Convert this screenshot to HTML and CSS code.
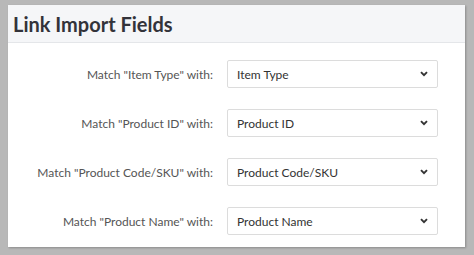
FILE: index.html
```html
<!DOCTYPE html>
<html>
<head>
<meta charset="utf-8">
<link rel="stylesheet" href="styles.css">
</head>
<body>
<div class="card">
  <div class="card-header"><h1 class="title">Link Import Fields</h1></div>
  <div class="card-body">
    <div class="row">
      <label class="label">Match "Item Type" with:</label>
      <div class="select"><span>Item Type</span><svg class="chev" width="8" height="6" viewBox="0 0 8 6"><path d="M1 1.2 L4 4.2 L7 1.2" fill="none" stroke="#333" stroke-width="1.9"/></svg></div>
    </div>
    <div class="row">
      <label class="label">Match "Product ID" with:</label>
      <div class="select"><span>Product ID</span><svg class="chev" width="8" height="6" viewBox="0 0 8 6"><path d="M1 1.2 L4 4.2 L7 1.2" fill="none" stroke="#333" stroke-width="1.9"/></svg></div>
    </div>
    <div class="row">
      <label class="label">Match "Product Code/SKU" with:</label>
      <div class="select"><span>Product Code/SKU</span><svg class="chev" width="8" height="6" viewBox="0 0 8 6"><path d="M1 1.2 L4 4.2 L7 1.2" fill="none" stroke="#333" stroke-width="1.9"/></svg></div>
    </div>
    <div class="row">
      <label class="label">Match "Product Name" with:</label>
      <div class="select"><span>Product Name</span><svg class="chev" width="8" height="6" viewBox="0 0 8 6"><path d="M1 1.2 L4 4.2 L7 1.2" fill="none" stroke="#333" stroke-width="1.9"/></svg></div>
    </div>
  </div>
</div>
</body>
</html>
```
FILE: styles.css
```css
html, body {
  margin: 0;
  padding: 0;
  background: #b8b8b8;
  width: 474px;
  height: 255px;
  overflow: hidden;
}
body {
  padding: 5px 0 0 8px;
  box-sizing: border-box;
  font-family: Lato, "Liberation Sans", sans-serif;
}
.card {
  width: 457px;
  height: 242px;
  background: #fff;
  box-shadow: 1px 1px 2px rgba(0,0,0,0.25);
  display: flex;
  flex-direction: column;
}
.card-header {
  height: 37px;
  background: #f5f6f8;
  border-bottom: 1px solid #e4e6e9;
  display: flex;
  align-items: center;
  padding-left: 5px;
}
.title {
  margin: 0;
  font-size: 20px;
  font-weight: 700;
  color: #33333a;
  letter-spacing: 0;
}
.card-body {
  padding-top: 17px;
  display: flex;
  flex-direction: column;
  gap: 21px;
}
.row {
  display: grid;
  grid-template-columns: 205px 211px;
  column-gap: 14px;
  align-items: center;
}
.label {
  text-align: right;
  font-size: 12px;
  color: #555;
}
.select {
  height: 28px;
  box-sizing: border-box;
  border: 1px solid #dcdcdc;
  border-radius: 2px;
  display: flex;
  align-items: center;
  justify-content: space-between;
  padding: 0 9px 0 9px;
  font-size: 12px;
  color: #333;
}
.chev {
  display: block;
}
```
